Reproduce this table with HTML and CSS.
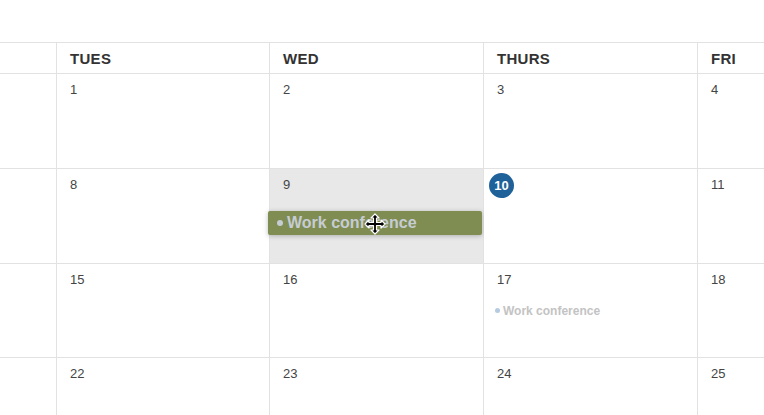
FILE: index.html
```html
<!DOCTYPE html>
<html>
<head>
<meta charset="utf-8">
<link rel="stylesheet" href="styles.css">
</head>
<body>
<div class="page">
  <div class="calendar">
    <div class="head"></div>
    <div class="head">TUES</div>
    <div class="head">WED</div>
    <div class="head">THURS</div>
    <div class="head">FRI</div>

    <div class="cell"></div>
    <div class="cell"><span class="num">1</span></div>
    <div class="cell"><span class="num">2</span></div>
    <div class="cell"><span class="num">3</span></div>
    <div class="cell"><span class="num">4</span></div>

    <div class="cell"></div>
    <div class="cell"><span class="num">8</span></div>
    <div class="cell cell-hover">
      <span class="num">9</span>
      <div class="drag-event"><span class="dot dot-big"></span>Work conference</div>
      <svg class="move-cursor" width="22" height="22" viewBox="0 0 22 22">
        <path d="M11 1 L15 5 L12.5 5 L12.5 9.5 L17 9.5 L17 7 L21 11 L17 15 L17 12.5 L12.5 12.5 L12.5 17 L15 17 L11 21 L7 17 L9.5 17 L9.5 12.5 L5 12.5 L5 15 L1 11 L5 7 L5 9.5 L9.5 9.5 L9.5 5 L7 5 Z" fill="#000" stroke="#fff" stroke-width="1.2" stroke-linejoin="round"/>
      </svg>
    </div>
    <div class="cell"><span class="today">10</span></div>
    <div class="cell"><span class="num">11</span></div>

    <div class="cell"></div>
    <div class="cell"><span class="num">15</span></div>
    <div class="cell"><span class="num">16</span></div>
    <div class="cell">
      <span class="num">17</span>
      <div class="mini-event"><span class="dot"></span>Work conference</div>
    </div>
    <div class="cell"><span class="num">18</span></div>

    <div class="cell"></div>
    <div class="cell"><span class="num">22</span></div>
    <div class="cell"><span class="num">23</span></div>
    <div class="cell"><span class="num">24</span></div>
    <div class="cell"><span class="num">25</span></div>
  </div>
</div>
</body>
</html>
```

FILE: styles.css
```css
html, body {
  margin: 0;
  padding: 0;
  background: #fff;
  overflow: hidden;
}

.page {
  width: 764px;
  height: 415px;
  padding-top: 42px;
  box-sizing: border-box;
  overflow: hidden;
  font-family: "Liberation Sans", Arial, sans-serif;
}

.calendar {
  display: grid;
  grid-template-columns: 56px 212px 213px 213px 1fr;
  grid-template-rows: 30px 94px 94px 93px 94px;
  gap: 1px;
  background: #e2e2e2;
  border-top: 1px solid #e2e2e2;
}

.head {
  background: #fff;
  display: flex;
  align-items: center;
  padding-left: 13px;
  font-size: 15px;
  letter-spacing: 0.3px;
  font-weight: bold;
  color: #333;
}

.cell {
  background: #fff;
  position: relative;
  padding: 8px 0 0 13px;
  box-sizing: border-box;
}

.cell-hover {
  background: #e8e8e8;
}

.num {
  display: block;
  font-size: 13px;
  line-height: 16px;
  color: #444;
}

.today {
  display: flex;
  align-items: center;
  justify-content: center;
  width: 25px;
  height: 25px;
  margin: -4px 0 0 -8px;
  border-radius: 50%;
  background: #1f6199;
  color: #fff;
  font-size: 13px;
  font-weight: bold;
}

.dot {
  display: inline-block;
  width: 5px;
  height: 5px;
  border-radius: 50%;
  background: #b5cbe0;
  margin-right: 3px;
  vertical-align: middle;
  position: relative;
  top: -1px;
}

.mini-event {
  margin: 16px 0 0 -2px;
  font-size: 12px;
  font-weight: bold;
  line-height: 14px;
  color: #c3c3c3;
}

.drag-event {
  position: absolute;
  left: -2px;
  top: 42px;
  width: 214px;
  height: 24px;
  box-sizing: border-box;
  padding-left: 9px;
  background: #7f8c52;
  border-radius: 2px;
  box-shadow: 0 1px 5px rgba(0, 0, 0, 0.25);
  color: #c6ccd3;
  font-size: 16px;
  font-weight: bold;
  line-height: 24px;
  white-space: nowrap;
}

.dot-big {
  width: 6px;
  height: 6px;
  background: #c6ccd3;
  margin-right: 4px;
}

.move-cursor {
  position: absolute;
  left: 94px;
  top: 44px;
}
```
